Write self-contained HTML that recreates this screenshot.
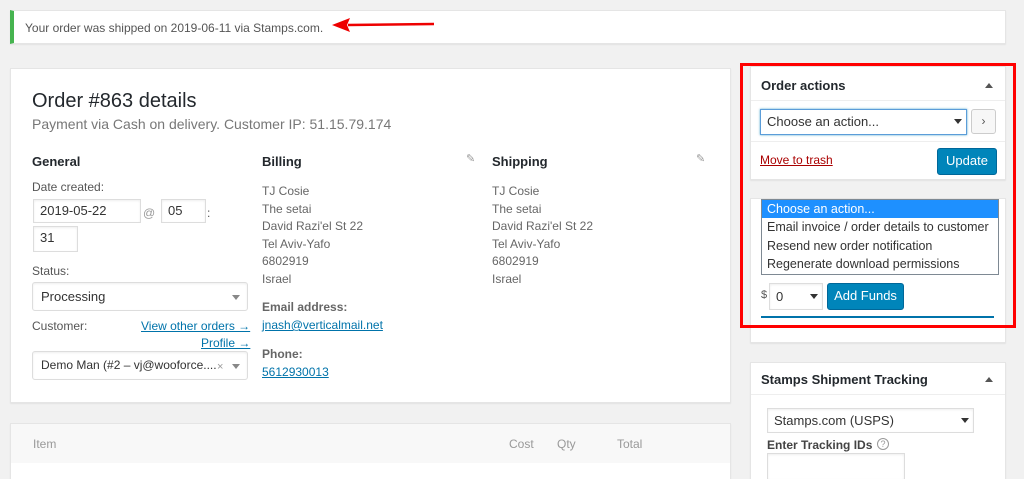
<!DOCTYPE html>
<html style="width:1024px;height:479px;overflow:hidden"><head><style>
*{margin:0;padding:0;box-sizing:border-box}
body{width:1024px;height:479px;background:#f1f1f1;font-family:"Liberation Sans",sans-serif;font-size:12px;color:#555;position:relative;overflow:hidden}
.a{position:absolute;white-space:nowrap}
.box{position:absolute;background:#fff;box-shadow:0 1px 1px rgba(0,0,0,.06);border:1px solid #e5e5e5}
.inp{position:absolute;background:#fff;border:1px solid #ddd;box-shadow:inset 0 1px 2px rgba(0,0,0,.07);font-size:13px;color:#333;padding-left:6px;line-height:22px}
.lnk{color:#0073aa;text-decoration:underline}
.btn{position:absolute;background:#0085ba;border:1px solid #006799;border-radius:3px;color:#fff;font-size:13px;text-align:center;line-height:24px}
.tri{position:absolute;width:0;height:0;border-left:4px solid transparent;border-right:4px solid transparent;border-top:5px solid #333}
.up{position:absolute;width:0;height:0;border-left:4px solid transparent;border-right:4px solid transparent;border-bottom:5px solid #555}
h3{font-size:13px;font-weight:bold;color:#23282d;position:absolute}
</style></head><body>
<div class="box" style="left:10px;top:10px;width:996px;height:34px;border-left:4px solid #46b450"></div>
<div class="a" style="left:25px;top:21px;font-size:12px;color:#555">Your order was shipped on 2019-06-11 via Stamps.com.</div>
<svg class="a" style="left:330px;top:17px" width="106" height="16"><line x1="18" y1="8" x2="104" y2="7" stroke="#e00" stroke-width="2.5"/><polygon points="2,8 20,1 17,8 20,15" fill="#e00"/></svg>

<div class="box" style="left:10px;top:68px;width:721px;height:335px"></div>
<div class="a" style="left:32px;top:90px;font-size:20px;color:#23282d">Order #863 details</div>
<div class="a" style="left:32px;top:116px;font-size:14px;color:#777">Payment via Cash on delivery. Customer IP: 51.15.79.174</div>

<h3 style="left:32px;top:154px">General</h3>
<div class="a" style="left:32px;top:180px">Date created:</div>
<div class="inp" style="left:33px;top:199px;width:108px;height:24px">2019-05-22</div>
<div class="a" style="left:143px;top:206px;color:#999">@</div>
<div class="inp" style="left:161px;top:199px;width:45px;height:24px">05</div>
<div class="a" style="left:207px;top:206px">:</div>
<div class="inp" style="left:33px;top:226px;width:45px;height:26px">31</div>
<div class="a" style="left:32px;top:264px">Status:</div>
<div class="inp" style="left:32px;top:282px;width:216px;height:29px;line-height:27px;border-radius:3px;padding-left:8px">Processing</div>
<div class="tri" style="left:232px;top:295px;border-top-color:#888"></div>
<div class="a" style="left:32px;top:319px">Customer:</div>
<div class="a lnk" style="left:141px;top:319px">View other orders →</div>
<div class="a lnk" style="left:201px;top:336px">Profile →</div>
<div class="inp" style="left:32px;top:351px;width:216px;height:29px;line-height:27px;border-radius:3px;padding-left:8px;font-size:12px">Demo Man (#2 – vj@wooforce....</div>
<div class="a" style="left:217px;top:361px;color:#999;font-size:11px">×</div>
<div class="tri" style="left:232px;top:364px;border-top-color:#888"></div>

<h3 style="left:262px;top:154px">Billing</h3>
<div class="a" style="left:466px;top:152px;color:#999;font-size:11px">✎</div>
<div class="a" style="left:262px;top:183px;line-height:17.5px;color:#666">TJ Cosie<br>The setai<br>David Razi'el St 22<br>Tel Aviv-Yafo<br>6802919<br>Israel</div>
<div class="a" style="left:262px;top:300px;font-weight:bold;color:#666">Email address:</div>
<div class="a lnk" style="left:262px;top:318px">jnash@verticalmail.net</div>
<div class="a" style="left:262px;top:347px;font-weight:bold;color:#666">Phone:</div>
<div class="a lnk" style="left:262px;top:365px">5612930013</div>

<h3 style="left:492px;top:154px">Shipping</h3>
<div class="a" style="left:696px;top:152px;color:#999;font-size:11px">✎</div>
<div class="a" style="left:492px;top:183px;line-height:17.5px;color:#666">TJ Cosie<br>The setai<br>David Razi'el St 22<br>Tel Aviv-Yafo<br>6802919<br>Israel</div>

<div class="box" style="left:10px;top:423px;width:721px;height:56px;background:#fff;border-bottom:none"></div>
<div class="a" style="left:11px;top:424px;width:719px;height:39px;background:#f8f8f8"></div>
<div class="a" style="left:33px;top:437px;color:#999">Item</div>
<div class="a" style="left:509px;top:437px;color:#999">Cost</div>
<div class="a" style="left:557px;top:437px;color:#999">Qty</div>
<div class="a" style="left:617px;top:437px;color:#999">Total</div>

<div class="box" style="left:750px;top:66px;width:256px;height:114px"></div>
<h3 style="left:761px;top:78px">Order actions</h3>
<div class="up" style="left:985px;top:83px"></div>
<div class="a" style="left:751px;top:100px;width:254px;height:1px;background:#eee"></div>
<div class="inp" style="left:760px;top:109px;width:207px;height:26px;border-color:#5b9dd9;box-shadow:0 0 2px rgba(30,140,190,.8);line-height:24px">Choose an action...</div>
<div class="tri" style="left:954px;top:119px"></div>
<div class="a" style="left:971px;top:109px;width:25px;height:25px;border:1px solid #ccc;background:#f7f7f7;border-radius:3px;text-align:center;line-height:22px;color:#555">›</div>
<div class="a" style="left:751px;top:141px;width:254px;height:1px;background:#eee"></div>
<div class="a" style="left:760px;top:153px;color:#a00;text-decoration:underline">Move to trash</div>
<div class="btn" style="left:937px;top:148px;width:60px;height:27px">Update</div>

<div class="box" style="left:750px;top:198px;width:256px;height:145px"></div>
<div class="a" style="left:761px;top:199px;width:238px;height:76px;border:1px solid #7e8993;background:#fff;font-size:12.5px;color:#333;line-height:18.3px">
<div style="background:#1e90ff;color:#fff;padding-left:5px">Choose an action...</div>
<div style="padding-left:5px">Email invoice / order details to customer</div>
<div style="padding-left:5px">Resend new order notification</div>
<div style="padding-left:5px">Regenerate download permissions</div></div>
<div class="a" style="left:761px;top:289px;font-size:11px">$</div>
<div class="inp" style="left:769px;top:283px;width:54px;height:27px;line-height:26px">0</div>
<div class="tri" style="left:810px;top:294px"></div>
<div class="btn" style="left:827px;top:283px;width:77px;height:27px">Add Funds</div>
<div class="a" style="left:761px;top:316px;width:233px;height:2px;background:#0073aa"></div>

<div class="a" style="left:740px;top:63px;width:276px;height:265px;border:3px solid #f00"></div>

<div class="box" style="left:750px;top:362px;width:256px;height:117px;border-bottom:none"></div>
<h3 style="left:761px;top:372px">Stamps Shipment Tracking</h3>
<div class="up" style="left:985px;top:377px"></div>
<div class="a" style="left:751px;top:394px;width:254px;height:1px;background:#eee"></div>
<div class="inp" style="left:767px;top:408px;width:207px;height:25px;line-height:23px">Stamps.com (USPS)</div>
<div class="tri" style="left:961px;top:418px"></div>
<div class="a" style="left:767px;top:438px;font-weight:bold;color:#444">Enter Tracking IDs</div>
<div class="a" style="left:877px;top:438px;width:12px;height:12px;border:1px solid #999;border-radius:50%;font-size:9px;text-align:center;line-height:10px;color:#999">?</div>
<div class="inp" style="left:767px;top:453px;width:138px;height:26px;border-bottom:none"></div>
</body></html>
